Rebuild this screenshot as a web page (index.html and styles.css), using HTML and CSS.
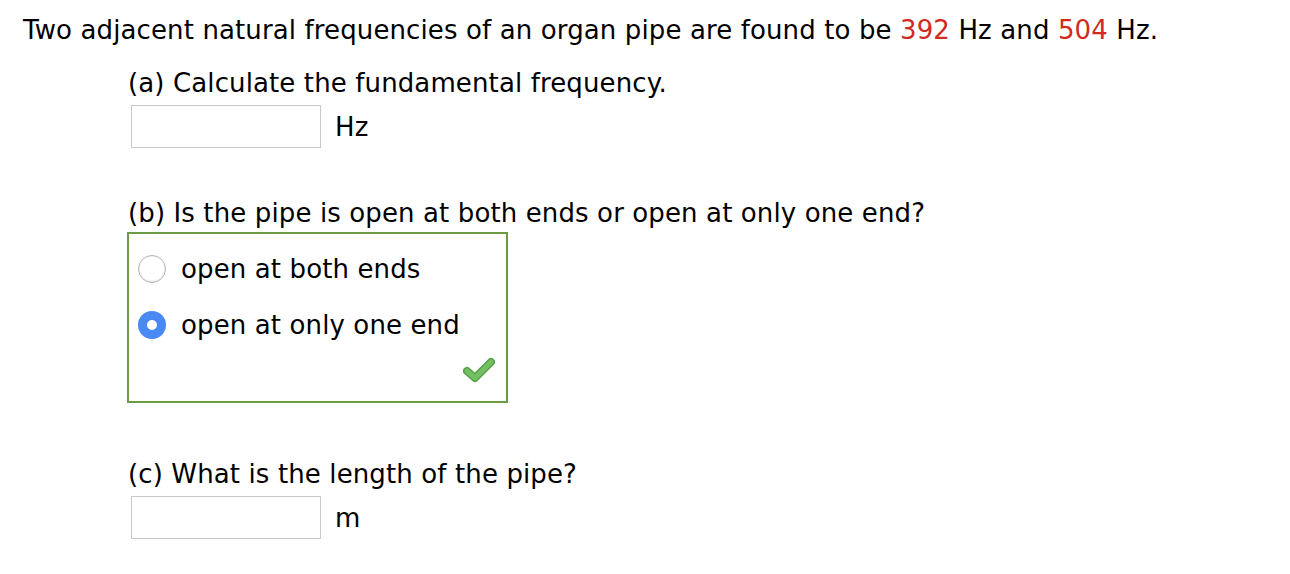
FILE: index.html
```html
<!DOCTYPE html>
<html lang="en">

<head>
    <meta charset="UTF-8">
    <title>Organ Pipe</title>
    <link rel="stylesheet" href="styles.css">
</head>

<body>
    <div class="question">
        <p class="intro">Two adjacent natural frequencies of an organ pipe are found to be <span class="num">392</span> Hz and <span class="num">504</span> Hz.</p>
        <div class="part part-a">
            <p class="prompt">(a) Calculate the fundamental frequency.</p>
            <div class="answer">
                <input type="text" class="answer-input">
                <span class="unit">Hz</span>
            </div>
        </div>
        <div class="part part-b">
            <p class="prompt">(b) Is the pipe is open at both ends or open at only one end?</p>
            <div class="choice-box">
                <label class="choice">
                    <span class="radio"></span>
                    <span>open at both ends</span>
                </label>
                <label class="choice">
                    <span class="radio checked"></span>
                    <span>open at only one end</span>
                </label>
                <div class="mark">
                    <svg width="32" height="26" viewBox="0 0 32 26">
                        <path d="M4 14 L12 21 L28 5" fill="none" stroke="#5a9f4b" stroke-width="8" stroke-linecap="round" stroke-linejoin="round"/>
                        <path d="M4 14 L12 21 L28 5" fill="none" stroke="#72c062" stroke-width="5" stroke-linecap="round" stroke-linejoin="round"/>
                    </svg>
                </div>
            </div>
        </div>
        <div class="part part-c">
            <p class="prompt">(c) What is the length of the pipe?</p>
            <div class="answer">
                <input type="text" class="answer-input">
                <span class="unit">m</span>
            </div>
        </div>
    </div>
</body>

</html>
```

FILE: styles.css
```css
* {
    margin: 0;
    padding: 0;
    box-sizing: border-box;
}

body {
    font-family: 'DejaVu Sans', Verdana, sans-serif;
    font-size: 26px;
    letter-spacing: 0.12px;
    color: #000;
    background: #fff;
}

.question {
    padding: 14px 0 0 23px;
}

.intro {
    line-height: 32px;
}

.num {
    color: #d12a1f;
}

.part {
    margin-left: 105px;
}

.prompt {
    line-height: 32px;
}

.part-a {
    margin-top: 21px;
}

.answer {
    display: flex;
    align-items: center;
    gap: 14px;
    margin-top: 6px;
    margin-left: 3px;
}

.answer-input {
    width: 190px;
    height: 43px;
    border: 1px solid #c8c8c8;
    outline: none;
}

.part-b {
    margin-top: 49px;
}

.choice-box {
    width: 381px;
    height: 171px;
    border: 2px solid #6d9b45;
    margin-top: 3px;
    margin-left: -1px;
    padding: 7px 8px 0 9px;
    position: relative;
}

.choice {
    display: flex;
    align-items: center;
    gap: 15px;
    height: 56px;
}

.radio {
    width: 28px;
    height: 28px;
    border-radius: 50%;
    border: 1px solid #b0b0b0;
    background: #fff;
    box-shadow: inset 0 -1px 2px rgba(0, 0, 0, 0.08);
    flex-shrink: 0;
}

.radio.checked {
    border: 9px solid #4a89f3;
    background: #fff;
    box-shadow: none;
}

.mark {
    position: absolute;
    right: 11px;
    bottom: 12px;
}

.part-c {
    margin-top: 55px;
}
```
